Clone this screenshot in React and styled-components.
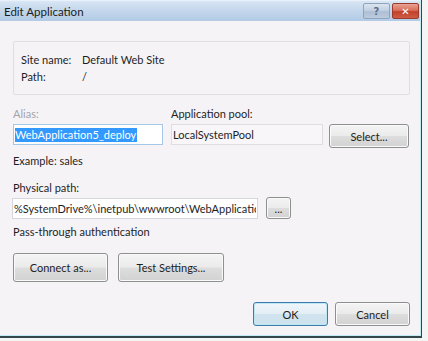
import React from "react";
import styled, { createGlobalStyle } from "styled-components";

const Global = createGlobalStyle`
  html, body { margin: 0; padding: 0; background: #f4f4f4; }
  body { font-family: Lato, "Noto Sans", sans-serif; font-size: 11px; color: #1e1e1e; }
  * { box-sizing: border-box; }
`;

const Frame = styled.div`
  width: 422px;
  height: 338px;
  background: #34444b;
  display: flex;
  align-items: flex-start;
`;

const Window = styled.div`
  width: 421px;
  height: 336px;
  border-right: 1px solid #c4eaf1;
  border-bottom: 1px solid #c4eaf1;
  background: #f6f3f7;
  display: flex;
  flex-direction: column;
`;

const TitleBar = styled.div`
  height: 21px;
  flex: none;
  display: flex;
  align-items: center;
  padding: 0 1px 0 4px;
  background: linear-gradient(#d9e6f4 0%, #c4d7ec 45%, #b3cbe6 100%);
  border-top: 1px solid #e9f1fa;
`;

const Title = styled.div`
  flex: 1;
  font-size: 11.5px;
  color: #1b1b1b;
`;

const CaptionButton = styled.div`
  width: ${(p) => p.$w}px;
  height: 16px;
  margin-left: 2px;
  border: 1px solid ${(p) => (p.$close ? "#9b3b2e" : "#8ea3bc")};
  border-radius: 2px;
  display: flex;
  align-items: center;
  justify-content: center;
  font-family: "DejaVu Sans", sans-serif;
  font-weight: bold;
  font-size: 10px;
  color: ${(p) => (p.$close ? "#ffffff" : "#5f6f86")};
  background: ${(p) =>
    p.$close
      ? "linear-gradient(#e8a394 0%, #d9705b 45%, #c2412b 55%, #cf5b44 100%)"
      : "linear-gradient(#dbe5f0 0%, #c2d1e2 45%, #aebfd5 55%, #bccbdd 100%)"};
`;

const Body = styled.div`
  flex: 1;
  display: flex;
  flex-direction: column;
  padding: 20px 10px 0 13px;
`;

const InfoBox = styled.div`
  height: 54px;
  border: 1px solid #e0dee2;
  border-radius: 2px;
  padding: 9px 7px 0;
  display: grid;
  grid-template-columns: 61px 1fr;
  grid-auto-rows: 17px;
  align-items: center;
`;

const Text = styled.div`
  font-size: 11px;
  line-height: 16px;
  color: ${(p) => (p.$muted ? "#a5a3a8" : "#1e1e1e")};
  margin-top: ${(p) => p.$mt || 0}px;
  white-space: nowrap;
`;

const FieldGrid = styled.div`
  display: grid;
  grid-template-columns: 150px 152px 80px;
  column-gap: 8px;
  row-gap: 2px;
  margin-top: 11px;
  & > :nth-child(3n) { margin-left: -2px; }
`;

const Input = styled.div`
  height: ${(p) => p.$h || 21}px;
  width: ${(p) => (p.$w ? `${p.$w}px` : "auto")};
  border: 1px solid ${(p) => p.$border || "#d9dde3"};
  background: ${(p) => p.$bg || "#ffffff"};
  padding: 0 1px;
  display: flex;
  align-items: center;
  overflow: hidden;
  white-space: nowrap;
  font-size: 11px;
`;

const Clip = styled.span`
  display: block;
  width: 100%;
  overflow: hidden;
  white-space: nowrap;
`;

const Selected = styled.span`
  background: #3399ff;
  color: #ffffff;
  line-height: 14px;
  padding: 0 1px 0 0;
`;

const Button = styled.div`
  width: ${(p) => p.$w}px;
  height: ${(p) => p.$h}px;
  flex: none;
  border: 1px solid ${(p) => (p.$default ? "#3d7bad" : "#8e8f8f")};
  border-radius: 3px;
  display: flex;
  align-items: center;
  justify-content: center;
  font-size: 11px;
  color: #1e1e1e;
  box-shadow: inset 0 0 0 1px ${(p) => (p.$default ? "#bfe6f5" : "#fafafa")};
  background: ${(p) =>
    p.$default
      ? "linear-gradient(#f0f6fa 0%, #e3eef5 48%, #d1e3ee 52%, #cde2ee 100%)"
      : "linear-gradient(#f4f4f4 0%, #ebebeb 48%, #dddddd 52%, #d2d2d2 100%)"};
`;

const Row = styled.div`
  display: flex;
  align-items: center;
  gap: ${(p) => p.$gap || 0}px;
  margin-top: ${(p) => p.$mt || 0}px;
  margin-left: ${(p) => p.$ml || 0}px;
  justify-content: ${(p) => (p.$end ? "flex-end" : "flex-start")};
`;

export default function App() {
  return (
    <>
      <Global />
      <Frame>
        <Window>
          <TitleBar>
            <Title>Edit Application</Title>
            <CaptionButton $w={27}>?</CaptionButton>
            <CaptionButton $w={27} $close>✕</CaptionButton>
          </TitleBar>
          <Body>
            <InfoBox>
              <Text>Site name:</Text>
              <Text>Default Web Site</Text>
              <Text>Path:</Text>
              <Text>/</Text>
            </InfoBox>
            <FieldGrid>
              <Text $muted>Alias:</Text>
              <Text>Application pool:</Text>
              <div />
              <Input $border="#a6c8e6">
                <Selected>WebApplication5_deploy</Selected>
              </Input>
              <Input $border="#e0dde2" $bg="#f8f6f9">LocalSystemPool</Input>
              <Button $w={80} $h={24}>Select...</Button>
            </FieldGrid>
            <Text $mt={5}>Example: sales</Text>
            <Text $mt={11}>Physical path:</Text>
            <Row $gap={8} $mt={1} $ml={-1}>
              <Input $w={246} $h={21} $border="#d4d8de">
                <Clip>%SystemDrive%\inetpub\wwwroot\WebApplication5_deploy</Clip>
              </Input>
              <Button $w={25} $h={22}>...</Button>
            </Row>
            <Text $mt={5}>Pass-through authentication</Text>
            <Row $gap={10} $mt={13}>
              <Button $w={95} $h={29}>Connect as...</Button>
              <Button $w={106} $h={29}>Test Settings...</Button>
            </Row>
            <Row $gap={7} $mt={20} $end>
              <Button $w={75} $h={24} $default>OK</Button>
              <Button $w={75} $h={24}>Cancel</Button>
            </Row>
          </Body>
        </Window>
      </Frame>
    </>
  );
}
